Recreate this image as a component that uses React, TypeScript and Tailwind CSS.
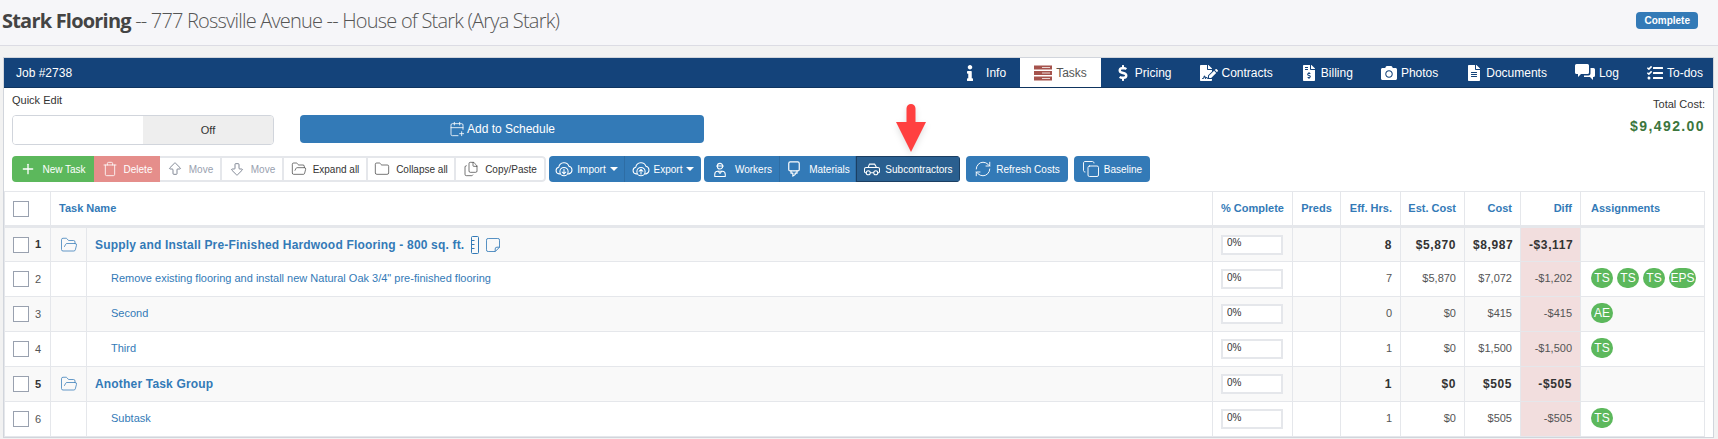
import React from 'react';
import {
  ArrowBigDown,
  ArrowBigUp,
  CalendarPlus,
  Copy,
  Files,
  Folder,
  FolderOpen,
  Plus,
  RefreshCw,
  Trash,
} from 'lucide-react';
import {
  FaCamera,
  FaDollarSign,
  FaFileAlt,
  FaFileInvoiceDollar,
  FaFileSignature,
  FaInfo,
  FaTasks,
} from 'react-icons/fa';

const CloudIcon = ({ up }: { up?: boolean }) => (
  <svg viewBox="0 0 24 24" className="h-4.5 w-4.5 shrink-0" fill="none" stroke="currentColor" strokeWidth="1.4" strokeLinecap="round" strokeLinejoin="round">
    <path d="M6.5 18.5H5.5a4.5 4.5 0 0 1-.4-8.9 7 7 0 0 1 13.5-1.2 5.2 5.2 0 0 1 .2 10.1h-1.3" />
    <circle cx="12" cy="15.5" r="5.5" />
    {up ? <path d="M12 18.5v-6M9.5 15 12 12.5l2.5 2.5" /> : <path d="M12 12.5v6M9.5 16l2.5 2.5 2.5-2.5" />}
  </svg>
);

const WorkerIcon = () => (
  <svg viewBox="0 0 24 24" className="h-4.5 w-4.5 shrink-0" fill="none" stroke="currentColor" strokeWidth="1.4" strokeLinecap="round" strokeLinejoin="round">
    <path d="M7.5 8h9M8.5 8a3.5 3.5 0 0 1 7 0" />
    <path d="M8.5 8.5a3.5 3.5 0 0 0 7 0" />
    <path d="M5 22v-3a4 4 0 0 1 4-4h6a4 4 0 0 1 4 4v3z" />
    <path d="M9.5 15l2.5 3 2.5-3" />
  </svg>
);

const MaterialIcon = () => (
  <svg viewBox="0 0 24 24" className="h-4.5 w-4.5 shrink-0" fill="none" stroke="currentColor" strokeWidth="1.6" strokeLinecap="round" strokeLinejoin="round">
    <rect x="5" y="2.5" width="14" height="12" rx="2" />
    <path d="M8 14.5v3h2.5v4l3-2v-2H16v-3" />
  </svg>
);

const CarIcon = () => (
  <svg viewBox="0 0 24 24" className="h-4.5 w-4.5 shrink-0" fill="none" stroke="currentColor" strokeWidth="1.4" strokeLinecap="round" strokeLinejoin="round">
    <path d="M7 10l1.5-4.5h7L18 10" />
    <path d="M4.5 17H3a1.5 1.5 0 0 1-1-1.5V12a2 2 0 0 1 2-2h16a2 2 0 0 1 2 2v3.5a1.5 1.5 0 0 1-1 1.5h-1.5" />
    <path d="M10 17h4" />
    <circle cx="7" cy="17" r="2.7" />
    <circle cx="17" cy="17" r="2.7" />
  </svg>
);

const TasksIcon = () => (
  <svg viewBox="0 0 18 15" className="h-4 w-4.5 shrink-0" fill="#a5534d">
    <rect x="0" y="0" width="18" height="4" />
    <rect x="0" y="5.5" width="18" height="4" />
    <rect x="0" y="11" width="18" height="4" />
    <rect x="8" y="1.5" width="8" height="1" fill="#e8d5d3" />
    <rect x="8" y="7" width="8" height="1" fill="#e8d5d3" />
    <rect x="8" y="12.5" width="8" height="1" fill="#e8d5d3" />
  </svg>
);

const LogIcon = () => (
  <svg viewBox="0 0 20 18" className="h-4.5 w-5 shrink-0" fill="currentColor">
    <path d="M1.5 0h11A1.5 1.5 0 0 1 14 1.5v7a1.5 1.5 0 0 1-1.5 1.5H6l-3 3v-3H1.5A1.5 1.5 0 0 1 0 8.5v-7A1.5 1.5 0 0 1 1.5 0z" />
    <path d="M15.5 4h3A1.5 1.5 0 0 1 20 5.5v6a1.5 1.5 0 0 1-1.500 1.500H18v3l-3-3H9v-1.500h4.500A2 2 0 0 0 15.500 9.500z" />
  </svg>
);

const Caret = () => (
  <svg viewBox="0 0 8 4" className="h-1 w-2 shrink-0">
    <path d="M0 0h8L4 4z" fill="currentColor" />
  </svg>
);

const RulerIcon = () => (
  <svg viewBox="0 0 10 18" className="h-4.5 w-2.5 shrink-0" fill="none" stroke="currentColor">
    <rect x="1.5" y="0.5" width="7" height="17" rx="1" />
    <path d="M1.500 4.500h3M1.500 8.500h3M1.500 12.500h3" />
  </svg>
);

const NoteIcon = () => (
  <svg viewBox="0 0 16 16" className="h-3.5 w-3.5 shrink-0" fill="none" stroke="currentColor">
    <path d="M2.500 0.500h11a2 2 0 0 1 2 2v8l-5 5h-8a2 2 0 0 1-2-2v-11a2 2 0 0 1 2-2z" />
    <path d="M15.500 10.500h-3a2 2 0 0 0-2 2v3" />
  </svg>
);

const tabs = [
  { label: 'Info', icon: <FaInfo className="-ml-1 mr-1 h-4 w-4" /> },
  { label: 'Tasks', icon: <TasksIcon />, active: true },
  { label: 'Pricing', icon: <FaDollarSign className="h-4 w-4" /> },
  { label: 'Contracts', icon: <FaFileSignature className="h-4 w-4.5" /> },
  { label: 'Billing', icon: <FaFileInvoiceDollar className="h-4 w-4" /> },
  { label: 'Photos', icon: <FaCamera className="h-4 w-4" /> },
  { label: 'Documents', icon: <FaFileAlt className="h-4 w-4" /> },
  { label: 'Log', icon: <LogIcon /> },
  { label: 'To-dos', icon: <FaTasks className="h-4 w-4" /> },
];

const rows = [
  { n: 1, name: 'Supply and Install Pre-Finished Hardwood Flooring - 800 sq. ft.', group: true, hrs: 8, est: '$5,870', cost: '$8,987', diff: '-$3,117', people: [], notes: true },
  { n: 2, name: 'Remove existing flooring and install new Natural Oak 3/4" pre-finished flooring', hrs: 7, est: '$5,870', cost: '$7,072', diff: '-$1,202', people: ['TS', 'TS', 'TS', 'EPS'] },
  { n: 3, name: 'Second', hrs: 0, est: '$0', cost: '$415', diff: '-$415', people: ['AE'] },
  { n: 4, name: 'Third', hrs: 1, est: '$0', cost: '$1,500', diff: '-$1,500', people: ['TS'] },
  { n: 5, name: 'Another Task Group', group: true, hrs: 1, est: '$0', cost: '$505', diff: '-$505', people: [] },
  { n: 6, name: 'Subtask', hrs: 1, est: '$0', cost: '$505', diff: '-$505', people: ['TS'] },
];

const whiteBtn = 'flex h-full items-center justify-center gap-1.5 border-y-2 border-r-2 border-gray-200 bg-white text-[10px]';
const blueBtn = 'flex h-full items-center justify-center gap-1 bg-[#337ab7] text-[10px] text-white';

const Check = () => <span className="block h-4 w-4 shrink-0 border border-gray-400 bg-white" />;

const th = 'border border-gray-200 border-b-3 px-2 whitespace-nowrap text-[11px] font-bold text-[#337ab7]';
const td = 'h-8.75 border border-gray-200 px-2';

const App: React.FC = () => {
  return (
    <div className="relative h-screen overflow-hidden bg-[#f2f2f2] font-['Liberation_Sans',sans-serif] text-[#333]">
      <header className="flex h-11.5 items-center justify-between border-b border-[#dcdce4] bg-[#f6f6f9] pb-1 pl-0.5 pr-5">
        <h1 className="font-['Open_Sans',sans-serif] text-xl font-light tracking-[-0.04em] text-[#555]">
          <span className="font-bold text-[#444]">Stark Flooring</span> -- 777 Rossville Avenue -- House of Stark (Arya Stark)
        </h1>
        <span className="rounded bg-[#337ab7] px-2 py-px text-[10px] font-bold text-white">Complete</span>
      </header>

      <div className="ml-0.75 mr-1 mt-2.75 border border-gray-300 bg-white">
        <nav className="flex h-7.5 items-center justify-between border-b border-[#0f3560] bg-[#14437a] pl-3 text-xs text-white">
          <span>Job #2738</span>
          <div className="-mr-1 flex h-full items-stretch">
            {tabs.map((tab) => (
              <div
                key={tab.label}
                className={
                  tab.active
                    ? 'flex items-center gap-1 bg-white px-3.5 text-[#555]'
                    : 'flex items-center gap-1 px-3.5'
                }
              >
                {tab.icon}
                {tab.label}
              </div>
            ))}
          </div>
        </nav>

        <div className="flex items-start justify-between pl-2 pr-2 pt-2">
          <div>
            <div className="-mt-1 text-[11px] leading-4">Quick Edit</div>
            <div className="mt-1.75 flex items-start gap-6.5">
              <div className="flex h-7.5 w-65.5 overflow-hidden rounded border border-gray-300 text-[11px]">
                <div className="flex-1 bg-white" />
                <div className="flex flex-1 items-center justify-center bg-[#eeeeee]">Off</div>
              </div>
              <button className="flex h-7 w-101 items-center justify-center gap-0.5 rounded-sm bg-[#337ab7] text-xs text-white">
                <CalendarPlus className="h-4 w-4" strokeWidth={1.25} />
                Add to Schedule
              </button>
            </div>
          </div>
          <div className="text-right">
            <div className="text-[11px] leading-4">Total Cost:</div>
            <div className="mt-1 text-sm font-bold leading-5 tracking-widest text-[#3c763d]">$9,492.00</div>
          </div>
        </div>

        <div className="mt-2.75 flex h-6.5 items-stretch gap-1.5 pl-2">
          <div className="flex items-stretch gap-0.75">
            <div className="flex h-full items-stretch overflow-hidden rounded-sm">
              <button className="flex w-20.5 items-center justify-center gap-1.5 bg-[#5cb85c] text-[10px] text-white">
                <Plus className="h-4 w-4" />
                New Task
              </button>
              <button className="flex w-16.5 items-center justify-center gap-1.5 bg-[#e58e8b] text-[10px] text-white">
                <Trash className="h-4 w-4" strokeWidth={1.25} />
                Delete
              </button>
              <button className={`${whiteBtn} w-15.5 text-gray-400`}>
                <ArrowBigUp className="h-4 w-4 text-gray-500" strokeWidth={1.25} />
                Move
              </button>
              <button className={`${whiteBtn} w-15.5 text-gray-400`}>
                <ArrowBigDown className="h-4 w-4 text-gray-500" strokeWidth={1.25} />
                Move
              </button>
              <button className={`${whiteBtn} w-21 text-[#333]`}>
                <FolderOpen className="h-4 w-4" strokeWidth={1} />
                Expand all
              </button>
              <button className={`${whiteBtn} w-22 text-[#333]`}>
                <Folder className="h-4 w-4" strokeWidth={1} />
                Collapse all
              </button>
              <button className={`${whiteBtn} w-22.5 rounded-r-sm text-[#333]`}>
                <Files className="h-4 w-4" strokeWidth={1} />
                Copy/Paste
              </button>
            </div>

            <div className="flex items-stretch divide-x divide-[#2e6da4] overflow-hidden rounded-sm">
              <button className={`${blueBtn} w-19`}>
                <CloudIcon />
                Import
                <Caret />
              </button>
              <button className={`${blueBtn} w-19`}>
                <CloudIcon up />
                Export
                <Caret />
              </button>
            </div>

            <div className="flex items-stretch divide-x divide-[#2e6da4] overflow-hidden rounded-sm">
              <button className={`${blueBtn} w-19 gap-1.5`}>
                <WorkerIcon />
                Workers
              </button>
              <button className={`${blueBtn} w-19 gap-1.5`}>
                <MaterialIcon />
                Materials
              </button>
              <button className="flex h-full w-26 items-center justify-center gap-1 border border-[#1b3f63] bg-[#2a5f8f] text-[10px] text-white">
                <CarIcon />
                Subcontractors
              </button>
            </div>
          </div>

          <button className={`${blueBtn} w-25.5 rounded-sm`}>
            <RefreshCw className="h-4.5 w-4.5" strokeWidth={1.25} />
            Refresh Costs
          </button>
          <button className={`${blueBtn} w-19 rounded-sm`}>
            <Copy className="h-4.5 w-4.5" strokeWidth={1.25} />
            Baseline
          </button>
        </div>

        <div className="mt-2.25 pr-2">
          <table className="w-full table-fixed border-collapse">
            <colgroup>
              <col className="w-11.5" />
              <col className="w-9" />
              <col />
              <col className="w-20" />
              <col className="w-12" />
              <col className="w-15" />
              <col className="w-16" />
              <col className="w-14" />
              <col className="w-15" />
              <col className="w-31" />
            </colgroup>
            <thead>
              <tr className="h-8.75">
                <th className={th}>
                  <Check />
                </th>
                <th colSpan={2} className={`${th} text-left`}>Task Name</th>
                <th className={`${th} text-left`}>% Complete</th>
                <th className={`${th} text-center`}>Preds</th>
                <th className={`${th} text-right`}>Eff. Hrs.</th>
                <th className={`${th} pl-1 text-right`}>Est. Cost</th>
                <th className={`${th} text-right`}>Cost</th>
                <th className={`${th} text-right`}>Diff</th>
                <th className={`${th} pl-2.5 text-left`}>Assignments</th>
              </tr>
            </thead>
            <tbody>
              {rows.map((row) => {
                const money = row.group
                  ? 'text-xs font-bold tracking-wider text-[#333]'
                  : 'pb-0.5 text-[11px] text-[#555]';
                return (
                  <tr key={row.n} className={row.n % 2 === 1 ? 'bg-[#f9f9f9]' : 'bg-white'}>
                    <td className={td}>
                      <div className="flex items-center gap-1.5">
                        <Check />
                        <span className={row.group ? 'text-[11px] font-bold' : 'text-[11px] text-[#555]'}>{row.n}</span>
                      </div>
                    </td>
                    <td className={`${td} text-center`}>
                      {row.group && <FolderOpen className="mx-auto h-4.5 w-4.5 text-[#337ab7]" strokeWidth={1} />}
                    </td>
                    <td className={td}>
                      {row.group ? (
                        <div className="flex items-center gap-1.5 text-[#337ab7]">
                          <span className="text-xs font-bold tracking-[0.015em]">{row.name}</span>
                          {row.notes && (
                            <>
                              <RulerIcon />
                              <NoteIcon />
                            </>
                          )}
                        </div>
                      ) : (
                        <div className="pb-0.5 pl-4 text-[11px] text-[#337ab7]">{row.name}</div>
                      )}
                    </td>
                    <td className={td}>
                      <input
                        readOnly
                        value="0%"
                        className="block h-5 w-15.5 border-2 border-gray-200 bg-white px-1 pb-1 text-[10px] text-[#333]"
                      />
                    </td>
                    <td className={td} />
                    <td className={`${td} text-right ${money}`}>{row.hrs}</td>
                    <td className={`${td} text-right ${money}`}>{row.est}</td>
                    <td className={`${td} text-right ${money}`}>{row.cost}</td>
                    <td className={`${td} bg-[#f2dede] text-right ${money}`}>{row.diff}</td>
                    <td className={`${td} pb-0.5 pl-2.5`}>
                      <div className="flex gap-1">
                        {row.people.map((p, i) => (
                          <span
                            key={i}
                            className="flex h-5 min-w-5.5 items-center justify-center rounded-full bg-[#5cb85c] px-0.5 text-xs text-white"
                          >
                            {p}
                          </span>
                        ))}
                      </div>
                    </td>
                  </tr>
                );
              })}
            </tbody>
          </table>
        </div>
      </div>

      <svg viewBox="0 0 30 48" className="absolute left-224 top-26 h-12 w-7.5 drop-shadow-md">
        <path d="M10.5 18V4.500a4.500 4.500 0 0 1 9 0V18H30L15 48 0 18z" fill="#ff4040" />
      </svg>
    </div>
  );
};

export default App;
